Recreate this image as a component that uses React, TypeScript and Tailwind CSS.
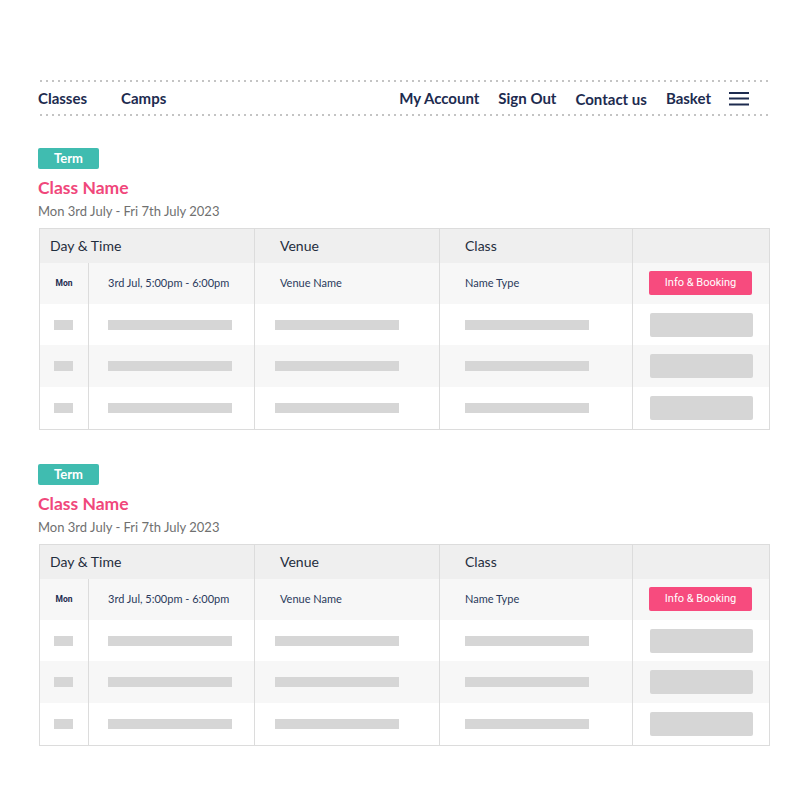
import React from 'react';

// ── Shared bits ──────────────────────────────────────────────────────────────
const dotted =
  'h-[2px] w-full bg-[radial-gradient(circle,#c4c4c4_0.8px,transparent_1px)] bg-[length:6px_2px] bg-repeat-x';

const navy = 'text-[#1d2b4f]';

function Bar({ w = 'w-[124px]' }: { w?: string }) {
  return <div className={`h-[10px] ${w} bg-[#d6d6d6]`} />;
}

interface Row {
  day?: string;
  time?: string;
  venue?: string;
  cls?: string;
}

const rows: Row[] = [
  { day: 'Mon', time: '3rd Jul, 5:00pm - 6:00pm', venue: 'Venue Name', cls: 'Name Type' },
  {},
  {},
  {},
];

const rowHeights = ['h-[41px]', 'h-[41px]', 'h-[42px]', 'h-[42px]'];

// ── Schedule table ───────────────────────────────────────────────────────────
function ScheduleTable() {
  return (
    <div className="border border-[#dcdcdc] w-[731px]">
      <div className="grid grid-cols-[215px_185px_193px_136px] h-[34px] bg-[#efefef] text-[14px] text-[#1f2d3d]">
        <div className="flex items-center pl-[10px] pb-[1px] border-r border-[#dcdcdc]">Day &amp; Time</div>
        <div className="flex items-center pl-[25px] pb-[1px] border-r border-[#dcdcdc]">Venue</div>
        <div className="flex items-center pl-[25px] pb-[1px] border-r border-[#dcdcdc]">Class</div>
        <div />
      </div>
      {rows.map((r, i) => (
        <div
          key={i}
          className={`grid grid-cols-[49px_166px_185px_193px_136px] ${rowHeights[i]} ${
            i % 2 === 0 ? 'bg-[#f7f7f7]' : 'bg-white'
          } text-[11px] text-[#2a3a5c]`}
        >
          <div className="flex items-center justify-center border-r border-[#dcdcdc]">
            {r.day ? (
              <span className="text-[8.5px] font-bold font-['Roboto',sans-serif] text-[#1d2b4f]">{r.day}</span>
            ) : (
              <div className="h-[10px] w-[19px] bg-[#d6d6d6] -ml-[1px]" />
            )}
          </div>
          <div className="flex items-center pl-[19px] border-r border-[#dcdcdc]">
            {r.time ? <span>{r.time}</span> : <Bar />}
          </div>
          <div className="flex items-center border-r border-[#dcdcdc] pl-[20px]">
            {r.venue ? <span className="pl-[5px]">{r.venue}</span> : <Bar />}
          </div>
          <div className="flex items-center border-r border-[#dcdcdc] pl-[25px]">
            {r.cls ? <span>{r.cls}</span> : <Bar />}
          </div>
          <div className="flex items-center pl-[16px]">
            {r.day ? (
              <button className="h-[24px] w-[103px] rounded-[2px] bg-[#f74b7e] text-white text-[11px] font-['Roboto',sans-serif] -mt-[1px]">
                Info &amp; Booking
              </button>
            ) : (
              <div className="h-[24px] w-[103px] ml-[1px] rounded-[2px] bg-[#d6d6d6]" />
            )}
          </div>
        </div>
      ))}
    </div>
  );
}

function Section() {
  return (
    <section>
      <div className="flex items-center justify-center h-[21px] w-[61px] rounded-[2px] bg-[#40bcb0] text-white text-[13px] font-bold">
        Term
      </div>
      <h2 className="mt-[7px] text-[17.5px] font-bold leading-[24px] text-[#f0477b]">Class Name</h2>
      <p className="mt-[2px] text-[13px] leading-[18px] text-[#707070]">Mon 3rd July - Fri 7th July 2023</p>
      <div className="mt-[8px] pl-[1px]">
        <ScheduleTable />
      </div>
    </section>
  );
}

// ── Page ─────────────────────────────────────────────────────────────────────
export default function App() {
  return (
    <div className="w-[800px] min-h-[800px] bg-white pt-[80px] px-[38px] font-['Lato',sans-serif]">
      <div className="w-[730px]">
        <div className={dotted} />
        <nav className={`flex items-center h-[32px] text-[15px] font-bold ${navy}`}>
          <a className="mr-[34px]">Classes</a>
          <a>Camps</a>
          <div className="ml-auto flex items-center gap-[19px]">
            <a>My Account</a>
            <a>Sign Out</a>
            <a className="mt-[2px]">Contact us</a>
            <a>Basket</a>
            <svg width="20" height="14" viewBox="0 0 20 14" className="ml-[-1px] mr-[19px] mt-[1px]">
              <rect x="0" y="0" width="20" height="2" fill="#1d2b4f" />
              <rect x="0" y="5.5" width="20" height="2" fill="#1d2b4f" />
              <rect x="0" y="11.5" width="20" height="2" fill="#1d2b4f" />
            </svg>
          </div>
        </nav>
        <div className={dotted} />
      </div>

      <div className="mt-[32px] flex flex-col gap-[34px]">
        <Section />
        <Section />
      </div>
    </div>
  );
}
